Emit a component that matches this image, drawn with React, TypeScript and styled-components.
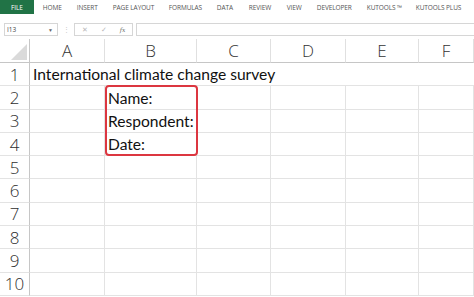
import React from "react";
import styled, { createGlobalStyle } from "styled-components";

const GlobalStyle = createGlobalStyle`
    html, body {
        margin: 0;
        padding: 0;
        background: #ffffff;
        overflow: hidden;
    }
    body {
        font-family: "Open Sans", "Noto Sans", sans-serif;
    }
`

const Page = styled.div`
    width: 474px;
    height: 297px;
    overflow: hidden;
    background: #ffffff;
`

const TabBar = styled.div`
    display: flex;
    align-items: center;
    height: 14px;
`

const Tab = styled.div<{ $active?: boolean }>`
    display: flex;
    align-items: center;
    height: 14px;
    padding: 0 ${p => (p.$active ? "11px" : "0")};
    margin-right: ${p => (p.$active ? "9px" : "0")};
    background: ${p => (p.$active ? "#217346" : "transparent")};
    color: ${p => (p.$active ? "#ffffff" : "#555555")};
    font-size: 6.5px;
    letter-spacing: -0.1px;
    white-space: nowrap;
`

const Tabs = styled.div`
    display: flex;
    flex: 1;
`

const FormulaBar = styled.div`
    display: flex;
    align-items: center;
    height: 15px;
    margin-top: 8px;
    padding-left: 4px;
`

const NameBox = styled.div`
    display: flex;
    align-items: center;
    justify-content: space-between;
    width: 54px;
    height: 13px;
    box-sizing: border-box;
    border: 1px solid #d6d6d6;
    padding: 0 4px 0 2px;
    font-size: 6.5px;
    color: #444444;
`

const Caret = styled.span`
    font-size: 5px;
    color: #666666;
`

const Grip = styled.div`
    width: 16px;
    text-align: center;
    color: #c8c8c8;
    font-size: 7px;
`

const FxBox = styled.div`
    display: flex;
    align-items: center;
    justify-content: space-around;
    width: 59px;
    height: 13px;
    box-sizing: border-box;
    border: 1px solid #d6d6d6;
    color: #b8b8b8;
    font-size: 7px;
`

const FxLabel = styled.span`
    font-family: "DejaVu Serif", serif;
    font-style: italic;
    color: #666666;
    font-size: 6px;
`

const FormulaInput = styled.div`
    flex: 1;
    height: 13px;
    margin-left: 3px;
    box-sizing: border-box;
    border: 1px solid #d6d6d6;
    border-right: none;
`

const Sheet = styled.div`
    display: grid;
    grid-template-columns: 30px 75px 92px 74px 75px 73px 1fr;
    grid-template-rows: 24px repeat(10, 23.3px);
    margin-top: 2px;
`

const Corner = styled.div`
    position: relative;
    grid-row: 1;
    grid-column: 1;
    border-right: 1px solid #c6c6c6;
    border-bottom: 1px solid #c6c6c6;
    box-sizing: border-box;
`

const CornerTriangle = styled.div`
    position: absolute;
    right: 2px;
    bottom: 2px;
    width: 0;
    height: 0;
    border-left: 16px solid transparent;
    border-bottom: 16px solid #dadada;
`

const ColHeader = styled.div<{ $col: number }>`
    grid-row: 1;
    grid-column: ${p => p.$col};
    display: flex;
    align-items: center;
    justify-content: center;
    border-right: 1px solid #e0e0e0;
    border-bottom: 1px solid #c6c6c6;
    box-sizing: border-box;
    font-family: "Open Sans", sans-serif;
    font-weight: 300;
    font-size: 17px;
    color: #333333;
`

const RowHeader = styled.div<{ $row: number }>`
    grid-row: ${p => p.$row};
    grid-column: 1;
    display: flex;
    align-items: center;
    justify-content: center;
    border-right: 1px solid #c6c6c6;
    border-bottom: 1px solid #e3e3e3;
    box-sizing: border-box;
    font-family: "Open Sans", sans-serif;
    font-weight: 300;
    font-size: 17px;
    color: #2e2e2e;
`

const Cell = styled.div<{ $row: number; $col: number; $span?: number }>`
    grid-row: ${p => p.$row};
    grid-column: ${p => p.$col} / span ${p => p.$span ?? 1};
    display: flex;
    align-items: flex-end;
    padding-left: 3px;
    border-right: ${p => (p.$span ? "none" : "1px solid #e3e3e3")};
    border-bottom: 1px solid #e3e3e3;
    box-sizing: border-box;
    font-family: "Lato", sans-serif;
    font-size: 15.6px;
    line-height: 21px;
    color: #111111;
    white-space: nowrap;
    min-width: 0;
`

const Highlight = styled.div`
    grid-column: 3;
    grid-row: 3 / 6;
    border: 2px solid #dc3640;
    border-radius: 4px;
    margin: -1px -1px 0 0;
    pointer-events: none;
    z-index: 1;
`

const tabs = ["HOME", "INSERT", "PAGE LAYOUT", "FORMULAS", "DATA", "REVIEW", "VIEW", "DEVELOPER", "KUTOOLS \u2122", "KUTOOLS PLUS"]
const tabWidths = [34, 36, 56, 48, 32, 38, 30, 50, 49, 60]
const columns = ["A", "B", "C", "D", "E", "F"]
const cellText: Record<number, string> = { 2: "Name:", 3: "Respondent:", 4: "Date:" }

export default function App() {
    const rows = Array.from({ length: 10 }, (_, i) => i + 1)
    return (
        <Page>
            <GlobalStyle />
            <TabBar>
                <Tab $active>FILE</Tab>
                <Tabs>
                    {tabs.map((t, i) => (
                        <Tab key={t} style={{ width: tabWidths[i] }}>{t}</Tab>
                    ))}
                </Tabs>
            </TabBar>
            <FormulaBar>
                <NameBox>
                    <span>I13</span>
                    <Caret>▼</Caret>
                </NameBox>
                <Grip>⋮</Grip>
                <FxBox>
                    <span>✕</span>
                    <span>✓</span>
                    <FxLabel>fx</FxLabel>
                </FxBox>
                <FormulaInput />
            </FormulaBar>
            <Sheet>
                <Corner><CornerTriangle /></Corner>
                {columns.map((c, i) => <ColHeader key={c} $col={i + 2}>{c}</ColHeader>)}
                {rows.map(r => (
                    <React.Fragment key={r}>
                        <RowHeader $row={r + 1}>{r}</RowHeader>
                        {r === 1 ? (
                            <Cell $row={2} $col={2} $span={6}>International climate change survey</Cell>
                        ) : (
                            columns.map((c, i) => (
                                <Cell key={c} $row={r + 1} $col={i + 2}>
                                    {i === 1 ? cellText[r] ?? "" : ""}
                                </Cell>
                            ))
                        )}
                    </React.Fragment>
                ))}
                <Highlight />
            </Sheet>
        </Page>
    )
}
